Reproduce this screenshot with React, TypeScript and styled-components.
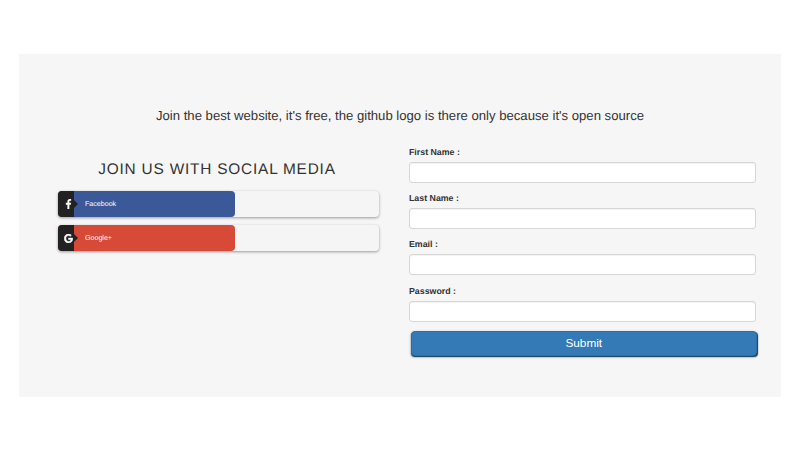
import React from "react";
import styled, { createGlobalStyle } from "styled-components";

const Global = createGlobalStyle`
  html, body { margin: 0; padding: 0; background: #fff; }
  body {
    font-family: "Liberation Sans", Arial, sans-serif;
    color: #333;
    text-rendering: geometricPrecision;
  }
`;

const Page = styled.div`
  width: 800px;
  height: 450px;
  padding: 54px 19px 0;
  box-sizing: border-box;
`;

const Panel = styled.main`
  height: 343px;
  background: #f6f6f6;
  box-sizing: border-box;
  padding: 52px 25px 0 39px;
`;

const Lead = styled.p`
  margin: 0 0 19px -14px;
  font-size: 13.13px;
  line-height: 20px;
  color: #333;
  text-align: center;
`;

const Columns = styled.div`
  display: flex;
  align-items: flex-start;
  gap: 29px;
`;

const Social = styled.section`
  width: 322px;
  flex: none;
  padding-top: 13px;
`;

const SocialTitle = styled.h2`
  margin: 0 4px 10px 0;
  font-size: 15.4px;
  line-height: 23px;
  font-weight: 400;
  letter-spacing: 0.8px;
  text-align: center;
  text-transform: uppercase;
  color: #333;
`;

const SocialList = styled.div`
  display: flex;
  flex-direction: column;
  gap: 8px;
`;

const Track = styled.a`
  display: flex;
  width: 321px;
  height: 26px;
  background: #f5f5f5;
  border-radius: 4px;
  box-shadow: 0 1px 3px rgba(0, 0, 0, 0.38);
`;

const Fill = styled.span<{ $color: string }>`
  position: relative;
  display: flex;
  align-items: center;
  width: 177px;
  height: 26px;
  padding-left: 27px;
  box-sizing: border-box;
  background: ${(p) => p.$color};
  border-radius: 4px;
  color: #fff;
  font-size: 7.1px;
`;

const IconBox = styled.span`
  position: absolute;
  left: 0;
  top: 0;
  width: 16px;
  height: 26px;
  background: #222;
  border-radius: 4px 0 0 4px;
  display: flex;
  align-items: center;
  justify-content: center;
  &::after {
    content: "";
    position: absolute;
    right: -4px;
    top: 9px;
    border-left: 4px solid #222;
    border-top: 4px solid transparent;
    border-bottom: 4px solid transparent;
  }
  svg { position: relative; z-index: 1; left: 2.5px; }
`;

const Form = styled.form`
  width: 349px;
  flex: none;
  display: flex;
  flex-direction: column;
`;

const Field = styled.div`
  display: flex;
  flex-direction: column;
  margin-bottom: 8.2px;
`;

const Label = styled.label`
  font-size: 8.8px;
  line-height: 15px;
  font-weight: 700;
  color: #333;
  margin-bottom: 2px;
`;

const Input = styled.input`
  width: 347px;
  height: 21px;
  box-sizing: border-box;
  background: #fff;
  border: 1px solid #d6d6d6;
  border-radius: 3px;
  box-shadow: inset 0 1px 1px rgba(0, 0, 0, 0.05);
  padding: 0 8px;
`;

const Submit = styled.button`
  width: 346.5px;
  height: 25px;
  margin: 1px 0 0 1.5px;
  box-sizing: border-box;
  background: #337ab7;
  border: 1px solid #2e6da4;
  border-radius: 4px;
  box-shadow: 0.5px 1px 1px #123c5e, 0 1px 3px rgba(0, 0, 0, 0.3);
  color: #fff;
  font-family: inherit;
  font-size: 11.8px;
  line-height: 18px;
  padding: 0;
`;

const FacebookIcon = () => (
  <svg width="7" height="10" viewBox="0 0 320 512" fill="#fff">
    <path d="M279 288l14-93h-89v-60c0-25 12-50 52-50h41V7s-37-7-72-7c-73 0-121 45-121 125v70H23v93h81v224h100V288z" />
  </svg>
);

const GoogleIcon = () => (
  <svg width="9" height="9" viewBox="0 0 488 512" fill="#fff" stroke="#fff" strokeWidth="30">
    <path d="M488 261c0 141-97 251-244 251C109 512 0 403 0 256S109 0 244 0c66 0 121 24 164 64l-66 64c-87-84-248-21-248 128 0 92 74 167 158 167 98 0 135-70 141-107H244v-85h236c5 13 8 27 8 30z" />
  </svg>
);

export default function App() {
  return (
    <Page>
      <Global />
      <Panel>
        <Lead>Join the best website, it's free, the github logo is there only because it's open source</Lead>
        <Columns>
          <Social>
            <SocialTitle>Join us with social media</SocialTitle>
            <SocialList>
              <Track>
                <Fill $color="#3b5998">
                  <IconBox><FacebookIcon /></IconBox>
                  Facebook
                </Fill>
              </Track>
              <Track>
                <Fill $color="#d84a38">
                  <IconBox><GoogleIcon /></IconBox>
                  Google+
                </Fill>
              </Track>
            </SocialList>
          </Social>
          <Form>
            {["First Name :", "Last Name :", "Email :", "Password :"].map((t) => (
              <Field key={t}>
                <Label>{t}</Label>
                <Input type={t.startsWith("Password") ? "password" : "text"} />
              </Field>
            ))}
            <Submit type="button">Submit</Submit>
          </Form>
        </Columns>
      </Panel>
    </Page>
  );
}
